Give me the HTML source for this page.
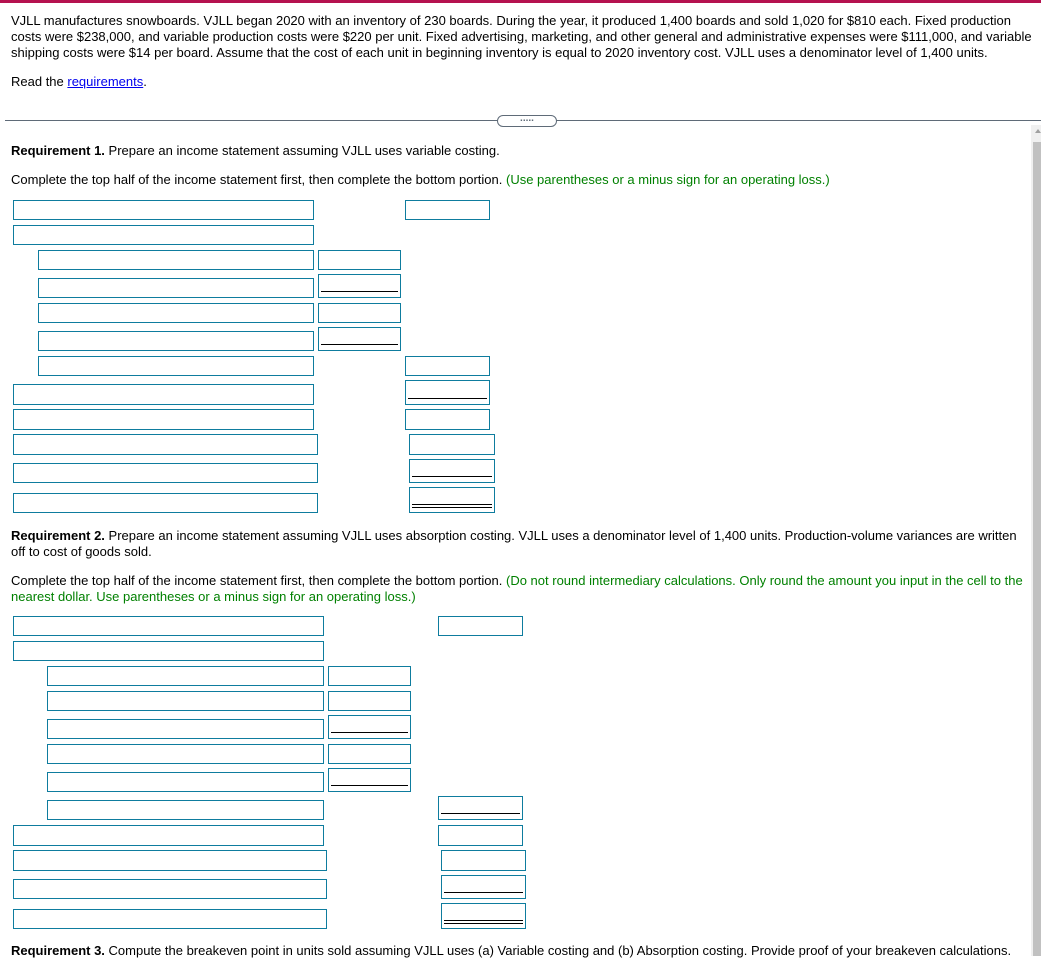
<!DOCTYPE html>
<html><head><meta charset="utf-8"><style>
body{margin:0;width:1041px;height:956px;overflow:hidden;background:#fff;font-family:"Liberation Sans",Arial,sans-serif;font-size:13px;color:#000;position:relative}
.t{position:absolute;left:11px;line-height:16px;white-space:nowrap}
.g{color:#008000}
.b{position:absolute;border:1px solid #0e7c9e;box-sizing:border-box;background:#fff}
.u::after{content:"";position:absolute;left:2px;right:2px;bottom:5px;border-top:1px solid #000}
.d::after{content:"";position:absolute;left:2px;right:2px;bottom:4px;height:2px;border-top:1px solid #000;border-bottom:1px solid #000}
</style></head><body>
<div style="position:absolute;left:0;top:0;width:1041px;height:3px;background:#b5124f"></div>
<div class="t" style="top:13px">VJLL manufactures snowboards. VJLL began 2020 with an inventory of 230 boards. During the year, it produced 1,400 boards and sold 1,020 for $810 each. Fixed production<br>costs were $238,000, and variable production costs were $220 per unit. Fixed advertising, marketing, and other general and administrative expenses were $111,000, and variable<br>shipping costs were $14 per board. Assume that the cost of each unit in beginning inventory is equal to 2020 inventory cost. VJLL uses a denominator level of 1,400 units.</div>
<div class="t" style="top:74px">Read the <span style="color:#00e;text-decoration:underline">requirements</span>.</div>
<div style="position:absolute;left:5px;top:120px;width:1036px;border-top:1px solid #5f6b78"></div>
<div style="position:absolute;left:497px;top:115px;width:58px;height:10px;border:1px solid #5f6b78;border-radius:6px;background:#fff;text-align:center;font-size:10px;font-weight:bold;line-height:6px;color:#5f6b78">.....</div>
<div style="position:absolute;left:1031px;top:125px;width:10px;height:831px;background:#f0f0f0"></div>
<div style="position:absolute;left:1033px;top:142px;width:8px;height:814px;background:#c1c1c1"></div>
<div style="position:absolute;left:1035px;top:129px;width:0;height:0;border-left:3px solid transparent;border-right:3px solid transparent;border-bottom:4px solid #a0a0a0"></div>
<div class="t" style="top:143px"><b>Requirement 1.</b> Prepare an income statement assuming VJLL uses variable costing.</div>
<div class="t" style="top:172px">Complete the top half of the income statement first, then complete the bottom portion. <span class="g">(Use parentheses or a minus sign for an operating loss.)</span></div>

<div class="b" style="left:13px;top:200px;width:301px;height:20px"></div>
<div class="b" style="left:405px;top:200px;width:85px;height:20px"></div>
<div class="b" style="left:13px;top:225px;width:301px;height:20px"></div>
<div class="b" style="left:38px;top:250px;width:276px;height:20px"></div>
<div class="b" style="left:318px;top:250px;width:83px;height:20px"></div>
<div class="b" style="left:38px;top:278px;width:276px;height:20px"></div>
<div class="b u" style="left:318px;top:274px;width:83px;height:24px"></div>
<div class="b" style="left:38px;top:303px;width:276px;height:20px"></div>
<div class="b" style="left:318px;top:303px;width:83px;height:20px"></div>
<div class="b" style="left:38px;top:331px;width:276px;height:20px"></div>
<div class="b u" style="left:318px;top:327px;width:83px;height:24px"></div>
<div class="b" style="left:38px;top:356px;width:276px;height:20px"></div>
<div class="b" style="left:405px;top:356px;width:85px;height:20px"></div>
<div class="b" style="left:13px;top:384px;width:301px;height:21px"></div>
<div class="b u" style="left:405px;top:380px;width:85px;height:25px"></div>
<div class="b" style="left:13px;top:409px;width:301px;height:21px"></div>
<div class="b" style="left:405px;top:409px;width:85px;height:21px"></div>
<div class="b" style="left:13px;top:434px;width:305px;height:21px"></div>
<div class="b" style="left:409px;top:434px;width:86px;height:21px"></div>
<div class="b" style="left:13px;top:463px;width:305px;height:20px"></div>
<div class="b u" style="left:409px;top:459px;width:86px;height:24px"></div>
<div class="b" style="left:13px;top:493px;width:305px;height:20px"></div>
<div class="b d" style="left:409px;top:487px;width:86px;height:26px"></div>

<div class="t" style="top:528px"><b>Requirement 2.</b> Prepare an income statement assuming VJLL uses absorption costing. VJLL uses a denominator level of 1,400 units. Production-volume variances are written<br>off to cost of goods sold.</div>
<div class="t" style="top:573px">Complete the top half of the income statement first, then complete the bottom portion. <span class="g">(Do not round intermediary calculations. Only round the amount you input in the cell to the<br>nearest dollar. Use parentheses or a minus sign for an operating loss.)</span></div>

<div class="b" style="left:13px;top:616px;width:311px;height:20px"></div>
<div class="b" style="left:438px;top:616px;width:85px;height:20px"></div>
<div class="b" style="left:13px;top:641px;width:311px;height:20px"></div>
<div class="b" style="left:47px;top:666px;width:277px;height:20px"></div>
<div class="b" style="left:328px;top:666px;width:83px;height:20px"></div>
<div class="b" style="left:47px;top:691px;width:277px;height:20px"></div>
<div class="b" style="left:328px;top:691px;width:83px;height:20px"></div>
<div class="b" style="left:47px;top:719px;width:277px;height:20px"></div>
<div class="b u" style="left:328px;top:715px;width:83px;height:24px"></div>
<div class="b" style="left:47px;top:744px;width:277px;height:20px"></div>
<div class="b" style="left:328px;top:744px;width:83px;height:20px"></div>
<div class="b" style="left:47px;top:772px;width:277px;height:20px"></div>
<div class="b u" style="left:328px;top:768px;width:83px;height:24px"></div>
<div class="b" style="left:47px;top:800px;width:277px;height:20px"></div>
<div class="b u" style="left:438px;top:796px;width:85px;height:24px"></div>
<div class="b" style="left:13px;top:825px;width:311px;height:21px"></div>
<div class="b" style="left:438px;top:825px;width:85px;height:21px"></div>
<div class="b" style="left:13px;top:850px;width:314px;height:21px"></div>
<div class="b" style="left:441px;top:850px;width:85px;height:21px"></div>
<div class="b" style="left:13px;top:879px;width:314px;height:20px"></div>
<div class="b u" style="left:441px;top:875px;width:85px;height:24px"></div>
<div class="b" style="left:13px;top:909px;width:314px;height:20px"></div>
<div class="b d" style="left:441px;top:903px;width:85px;height:26px"></div>

<div class="t" style="top:943px"><b>Requirement 3.</b> Compute the breakeven point in units sold assuming VJLL uses (a) Variable costing and (b) Absorption costing. Provide proof of your breakeven calculations.</div>
</body></html>
